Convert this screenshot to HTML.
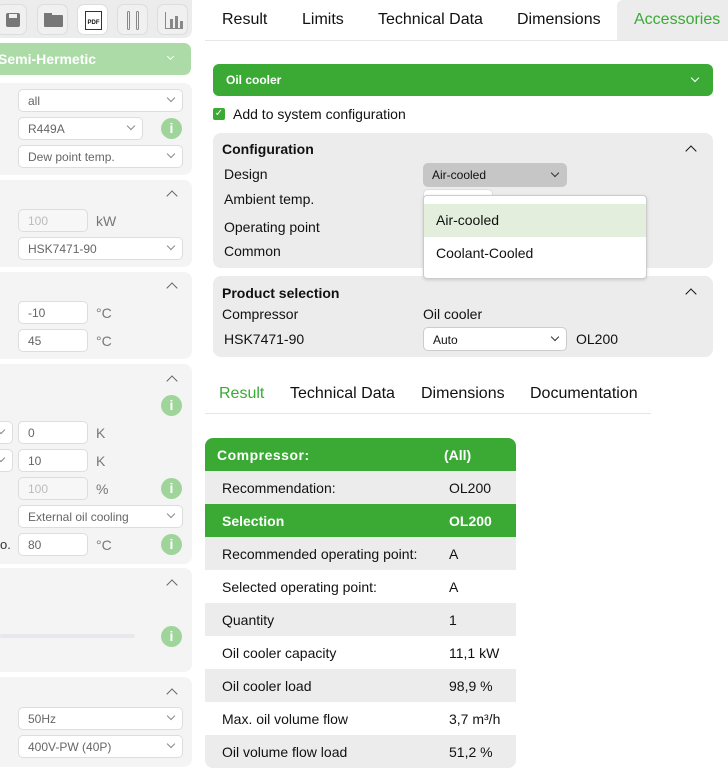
<!DOCTYPE html>
<html><head><meta charset="utf-8"><style>
*{box-sizing:border-box;margin:0;padding:0}
body{width:728px;height:773px;overflow:hidden;background:#fff;font-family:"Liberation Sans",Arial,sans-serif;color:#111;position:relative}
.a{position:absolute}
.pnl{position:absolute;left:-10px;width:202px;background:#f4f4f4;border-radius:8px}
.sel{position:absolute;height:23px;background:#fff;border:1px solid #ddd;border-radius:5px;font-size:12px;color:#666;padding:4px 0 0 9px}
.sel:after{content:"";position:absolute;right:8px;top:5px;width:5px;height:5px;border-right:1px solid #888;border-bottom:1px solid #888;transform:rotate(45deg)}
.inp{position:absolute;left:18px;width:70px;height:23px;background:#fff;border:1px solid #ddd;border-radius:5px;font-size:12px;color:#666;padding:4px 0 0 9px}
.dis{background:#f7f7f7;color:#bbb}
.u{position:absolute;left:96px;font-size:14px;color:#777}
.i{position:absolute;left:161px;width:21px;height:21px;border-radius:50%;background:#9fd59a;color:#fff;font-size:14px;font-weight:bold;text-align:center;line-height:21px}
.car{position:absolute;width:8px;height:8px;border-left:1.5px solid #666;border-top:1.5px solid #666;transform:rotate(45deg)}
.tb{position:absolute;top:4px;width:31px;height:31px;background:#f0f0f0;border:1px solid #ddd;border-radius:7px}
.tab{position:absolute;font-size:16px;top:11px}
.row{position:absolute;left:205px;width:311px;height:33px;font-size:14px}
.row span{position:absolute;top:9px}
.row .l{left:17px}.row .r{left:244px}
.g{background:#3aaa35;color:#fff;font-weight:bold}
.gr{background:#ececec}
.lb{position:absolute;font-size:14px}
</style></head><body>
<!-- toolbar -->
<div class="a" style="left:-10px;top:0;width:202px;height:38px;background:#ececec;border-radius:0 0 8px 0"></div>
<div class="tb" style="left:-4px"><div class="a" style="left:9px;top:8px;width:14px;height:14px;background:#777;border-radius:2px"></div><div class="a" style="left:12px;top:9px;width:8px;height:4px;background:#f0f0f0"></div></div>
<div class="tb" style="left:37px"><div class="a" style="left:6px;top:8px;width:8px;height:3px;background:#777"></div><div class="a" style="left:6px;top:10px;width:19px;height:12px;background:#777;border-radius:1px"></div></div>
<div class="tb" style="left:77px;background:#fff"><div class="a" style="left:7px;top:6px;width:17px;height:19px;border:1.5px solid #333;font-size:6px;font-weight:bold;padding-top:8px;text-align:center">PDF</div></div>
<div class="tb" style="left:117px"><div class="a" style="left:9px;top:6px;width:3px;height:19px;border:1.5px solid #888;border-radius:3px"></div><div class="a" style="left:18px;top:6px;width:3px;height:19px;border:1.5px solid #888;border-radius:3px"></div></div>
<div class="tb" style="left:157px"><div class="a" style="left:7px;top:7px;width:18px;height:17px;border-left:1.5px solid #888;border-bottom:1.5px solid #888"></div><div class="a" style="left:12px;top:14px;width:3px;height:9px;background:#888"></div><div class="a" style="left:17px;top:11px;width:3px;height:12px;background:#888"></div><div class="a" style="left:22px;top:16px;width:3px;height:7px;background:#888"></div></div>
<!-- green header -->
<div class="a" style="left:-10px;top:43px;width:201px;height:32px;background:#acdba7;border-radius:7px;color:#fff;font-weight:bold;font-size:14px;padding:8px 0 0 8px">Semi-Hermetic</div>
<div class="a" style="left:168px;top:54px;width:5px;height:5px;border-right:1px solid #fff;border-bottom:1px solid #fff;transform:rotate(45deg)"></div>
<!-- panel1 -->
<div class="pnl" style="top:83px;height:92px"></div>
<div class="sel" style="left:18px;top:89px;width:165px">all</div>
<div class="sel" style="left:18px;top:117px;width:125px">R449A</div>
<div class="i" style="top:118px">i</div>
<div class="sel" style="left:18px;top:145px;width:165px">Dew point temp.</div>
<!-- panel2 -->
<div class="pnl" style="top:180px;height:87px"></div>
<div class="car" style="left:168px;top:192px"></div>
<div class="inp dis" style="top:209px">100</div><div class="u" style="top:213px">kW</div>
<div class="sel" style="left:18px;top:237px;width:165px">HSK7471-90</div>
<!-- panel3 -->
<div class="pnl" style="top:272px;height:87px"></div>
<div class="car" style="left:168px;top:284px"></div>
<div class="inp" style="top:301px">-10</div><div class="u" style="top:305px">°C</div>
<div class="inp" style="top:329px">45</div><div class="u" style="top:333px">°C</div>
<!-- panel4 -->
<div class="pnl" style="top:364px;height:200px"></div>
<div class="car" style="left:168px;top:377px"></div>
<div class="i" style="top:395px">i</div>
<div class="sel" style="left:-20px;top:421px;width:33px"></div>
<div class="inp" style="top:421px">0</div><div class="u" style="top:425px">K</div>
<div class="sel" style="left:-20px;top:449px;width:33px"></div>
<div class="inp" style="top:449px">10</div><div class="u" style="top:453px">K</div>
<div class="inp dis" style="top:477px">100</div><div class="u" style="top:481px">%</div>
<div class="i" style="top:478px">i</div>
<div class="sel" style="left:18px;top:505px;width:165px">External oil cooling</div>
<div class="lb" style="left:0;top:537px;font-size:13px;color:#333">o.</div>
<div class="inp" style="top:533px">80</div><div class="u" style="top:537px">°C</div>
<div class="i" style="top:534px">i</div>
<!-- panel5 -->
<div class="pnl" style="top:568px;height:104px"></div>
<div class="car" style="left:168px;top:581px"></div>
<div class="a" style="left:0;top:634px;width:135px;height:4px;background:#e6e8ec;border-radius:2px"></div>
<div class="i" style="top:626px">i</div>
<!-- panel6 -->
<div class="pnl" style="top:677px;height:90px"></div>
<div class="car" style="left:168px;top:690px"></div>
<div class="sel" style="left:18px;top:707px;width:165px">50Hz</div>
<div class="sel" style="left:18px;top:735px;width:165px">400V-PW (40P)</div>

<!-- top tabs -->
<div class="a" style="left:617px;top:0;width:111px;height:40px;background:#ececec;border-radius:6px 0 0 0"></div>
<div class="a" style="left:205px;top:40px;width:523px;height:1px;background:#e6e6e6"></div>
<div class="tab" style="left:222px">Result</div>
<div class="tab" style="left:302px">Limits</div>
<div class="tab" style="left:378px">Technical Data</div>
<div class="tab" style="left:517px">Dimensions</div>
<div class="tab" style="left:634px;color:#3aaa35">Accessories</div>
<!-- oil cooler bar -->
<div class="a" style="left:213px;top:64px;width:500px;height:32px;background:#3aaa35;border-radius:6px;color:#fff;font-size:12px;font-weight:bold;padding:9px 0 0 13px">Oil cooler</div>
<div class="a" style="left:692px;top:75px;width:6px;height:6px;border-right:1px solid #fff;border-bottom:1px solid #fff;transform:rotate(45deg)"></div>
<div class="a" style="left:213px;top:108px;width:12px;height:12px;background:#3aaa35;border-radius:2px;color:#fff;font-size:10px;text-align:center;line-height:12px">✓</div>
<div class="lb" style="left:233px;top:106px">Add to system configuration</div>
<!-- configuration -->
<div class="a" style="left:213px;top:133px;width:500px;height:135px;background:#ececec;border-radius:8px"></div>
<div class="lb" style="left:222px;top:141px;font-weight:bold">Configuration</div>
<div class="car" style="left:687px;top:147px;border-color:#111"></div>
<div class="lb" style="left:224px;top:166px">Design</div>
<div class="lb" style="left:224px;top:191px">Ambient temp.</div>
<div class="lb" style="left:224px;top:219px">Operating point</div>
<div class="lb" style="left:224px;top:243px">Common</div>
<div class="a" style="left:423px;top:163px;width:144px;height:24px;background:#c6c6c6;border-radius:5px;font-size:12px;padding:5px 0 0 9px">Air-cooled</div>
<div class="a" style="left:552px;top:170px;width:6px;height:6px;border-right:1px solid #333;border-bottom:1px solid #333;transform:rotate(45deg)"></div>
<div class="a" style="left:423px;top:189px;width:70px;height:20px;background:#fff;border:1px solid #ddd;border-radius:5px"></div>
<!-- product selection -->
<div class="a" style="left:213px;top:276px;width:500px;height:81px;background:#ececec;border-radius:8px"></div>
<div class="lb" style="left:222px;top:285px;font-weight:bold">Product selection</div>
<div class="car" style="left:687px;top:290px;border-color:#111"></div>
<div class="lb" style="left:222px;top:306px">Compressor</div>
<div class="lb" style="left:423px;top:306px">Oil cooler</div>
<div class="lb" style="left:224px;top:331px">HSK7471-90</div>
<div class="a" style="left:423px;top:327px;width:144px;height:24px;background:#fff;border:1px solid #ccc;border-radius:5px;font-size:12px;padding:5px 0 0 9px">Auto</div>
<div class="a" style="left:552px;top:334px;width:6px;height:6px;border-right:1px solid #333;border-bottom:1px solid #333;transform:rotate(45deg)"></div>
<div class="lb" style="left:576px;top:331px">OL200</div>
<!-- dropdown on top -->
<div class="a" style="left:423px;top:195px;width:224px;height:84px;background:#fff;border:1px solid #ccc;border-radius:4px;box-shadow:0 1px 3px rgba(0,0,0,.15);z-index:5">
<div class="a" style="left:0;top:8px;width:222px;height:33px;background:#e3efdc"></div>
<div class="lb" style="left:12px;top:16px">Air-cooled</div>
<div class="lb" style="left:12px;top:49px">Coolant-Cooled</div>
</div>
<!-- lower tabs -->
<div class="tab" style="left:219px;top:385px;color:#3aaa35">Result</div>
<div class="tab" style="left:290px;top:385px">Technical Data</div>
<div class="tab" style="left:421px;top:385px">Dimensions</div>
<div class="tab" style="left:530px;top:385px">Documentation</div>
<div class="a" style="left:205px;top:413px;width:446px;height:1px;background:#e6e6e6"></div>
<!-- table -->
<div class="row g" style="top:438px;height:33px;border-radius:8px 8px 0 0"><span class="l" style="left:12px;letter-spacing:.5px">Compressor:</span><span class="r" style="left:239px">(All)</span></div>
<div class="row gr" style="top:471px"><span class="l">Recommendation:</span><span class="r">OL200</span></div>
<div class="row g" style="top:504px"><span class="l">Selection</span><span class="r">OL200</span></div>
<div class="row gr" style="top:537px"><span class="l">Recommended operating point:</span><span class="r">A</span></div>
<div class="row" style="top:570px"><span class="l">Selected operating point:</span><span class="r">A</span></div>
<div class="row gr" style="top:603px"><span class="l">Quantity</span><span class="r">1</span></div>
<div class="row" style="top:636px"><span class="l">Oil cooler capacity</span><span class="r">11,1 kW</span></div>
<div class="row gr" style="top:669px"><span class="l">Oil cooler load</span><span class="r">98,9 %</span></div>
<div class="row" style="top:702px"><span class="l">Max. oil volume flow</span><span class="r">3,7 m³/h</span></div>
<div class="row gr" style="top:735px;border-radius:0 0 8px 8px"><span class="l">Oil volume flow load</span><span class="r">51,2 %</span></div>
</body></html>
